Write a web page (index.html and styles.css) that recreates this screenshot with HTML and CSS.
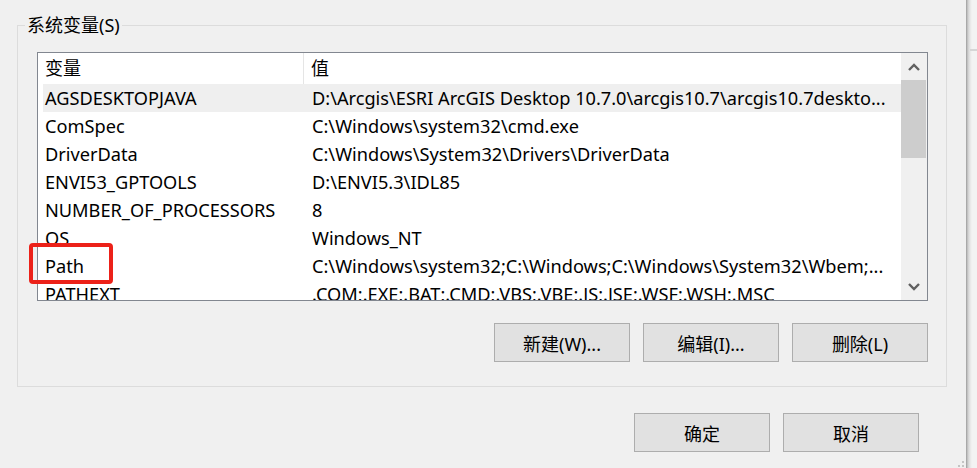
FILE: index.html
```html
<!DOCTYPE html>
<html lang="zh-CN">
<head>
<meta charset="utf-8">
<title>系统变量</title>
<link rel="stylesheet" href="styles.css">
</head>
<body>
<div class="page">
  <div class="window">
    <div class="group">
      <div class="legend">系统变量(S)</div>
      <div class="listbox">
        <div class="list">
          <div class="header">
            <div class="hcol1">变量</div>
            <div class="hcol2">值</div>
          </div>
          <div class="row sel"><span class="c1">AGSDESKTOPJAVA</span><span class="c2">D:\Arcgis\ESRI ArcGIS Desktop 10.7.0\arcgis10.7\arcgis10.7deskto...</span></div>
          <div class="row"><span class="c1">ComSpec</span><span class="c2">C:\Windows\system32\cmd.exe</span></div>
          <div class="row"><span class="c1">DriverData</span><span class="c2">C:\Windows\System32\Drivers\DriverData</span></div>
          <div class="row"><span class="c1">ENVI53_GPTOOLS</span><span class="c2">D:\ENVI5.3\IDL85</span></div>
          <div class="row"><span class="c1">NUMBER_OF_PROCESSORS</span><span class="c2">8</span></div>
          <div class="row"><span class="c1">OS</span><span class="c2">Windows_NT</span></div>
          <div class="row"><span class="c1">Path</span><span class="c2">C:\Windows\system32;C:\Windows;C:\Windows\System32\Wbem;...</span></div>
          <div class="row"><span class="c1">PATHEXT</span><span class="c2">.COM;.EXE;.BAT;.CMD;.VBS;.VBE;.JS;.JSE;.WSF;.WSH;.MSC</span></div>
        </div>
        <div class="scrollbar">
          <div class="sb-btn"><svg width="12" height="8" viewBox="0 0 12 8"><polyline points="1,7 6,2 11,7" fill="none" stroke="#606060" stroke-width="2.4"/></svg></div>
          <div class="sb-thumb"></div>
          <div class="sb-track"></div>
          <div class="sb-btn"><svg width="12" height="8" viewBox="0 0 12 8"><polyline points="1,1 6,6 11,1" fill="none" stroke="#606060" stroke-width="2.4"/></svg></div>
        </div>
      </div>
      <div class="btnrow">
        <button class="btn">新建(W)...</button>
        <button class="btn">编辑(I)...</button>
        <button class="btn">删除(L)</button>
      </div>
    </div>
    <div class="dlgrow">
      <button class="btn">确定</button>
      <button class="btn">取消</button>
    </div>
    <div class="mark"></div>
    <svg class="grip" width="10" height="8" viewBox="0 0 10 8"><rect x="6" y="1" width="2" height="2" fill="#c4c4c4"/><rect x="2" y="5" width="2" height="2" fill="#c4c4c4"/><rect x="6" y="5" width="2" height="2" fill="#c4c4c4"/></svg>
  </div>
  <div class="backdrop"><div class="backline"></div></div>
</div>
</body>
</html>
```

FILE: styles.css
```css
html, body {
  margin: 0;
  padding: 0;
  background: #f0f0f0;
}
body {
  font-family: "Noto Sans", "Noto Sans CJK SC", sans-serif;
  font-size: 18px;
  color: #000;
  overflow: hidden;
}
.page {
  display: flex;
  width: 977px;
  height: 468px;
}
.window {
  position: relative;
  width: 966px;
  height: 468px;
  flex: none;
  box-sizing: border-box;
  padding: 25px 0 0 17px;
  background: #f0f0f0;
}
.group {
  box-sizing: border-box;
  width: 930px;
  height: 362px;
  border: 1px solid #dcdcdc;
}
.legend {
  width: fit-content;
  margin: -13px 0 0 7px;
  padding: 0 2px;
  height: 24px;
  line-height: 24px;
  background: #f0f0f0;
  white-space: nowrap;
}
.listbox {
  display: flex;
  box-sizing: border-box;
  width: 891px;
  height: 249px;
  margin: 15px 0 0 19px;
  border: 1px solid #828790;
  background: #fff;
}
.list {
  flex: 1;
  min-width: 0;
  overflow: hidden;
}
.header {
  display: flex;
  height: 31px;
  background: #fff;
}
.hcol1 {
  width: 266px;
  box-sizing: border-box;
  padding-left: 7px;
  line-height: 31px;
  border-right: 1px solid #e5e5e5;
}
.hcol2 {
  padding-left: 7px;
  line-height: 31px;
}
.row {
  display: grid;
  grid-template-columns: 262px 1fr;
  height: 28px;
  line-height: 28px;
  margin-left: 5px;
  font-size: 18.2px;
  white-space: nowrap;
}
.row.sel {
  background: #efefef;
}
.c1 {
  padding-left: 2px;
  overflow: hidden;
}
.c2 {
  padding-left: 7px;
  overflow: hidden;
}
.scrollbar {
  width: 26px;
  flex: none;
  display: flex;
  flex-direction: column;
  background: #f0f0f0;
}
.sb-btn {
  height: 27px;
  display: flex;
  align-items: center;
  justify-content: center;
  flex: none;
}
.sb-thumb {
  height: 78px;
  flex: none;
  margin-right: 1px;
  background: #cdcdcd;
}
.sb-track {
  flex: 1;
}
.btnrow {
  display: flex;
  justify-content: flex-end;
  gap: 13px;
  margin-top: 22px;
  padding-right: 18px;
}
.btn {
  width: 136px;
  height: 39px;
  box-sizing: border-box;
  margin: 0;
  padding: 0;
  border: 1px solid #adadad;
  background: #e1e1e1;
  font-family: inherit;
  font-size: 18px;
  color: #000;
}
.dlgrow {
  display: flex;
  justify-content: flex-end;
  gap: 13px;
  margin-top: 26px;
  padding-right: 47px;
}
.mark {
  position: absolute;
  left: 29px;
  top: 243px;
  width: 84px;
  height: 41px;
  box-sizing: border-box;
  border: 4px solid #ec2119;
  border-radius: 4px;
}
.grip {
  position: absolute;
  right: 0;
  bottom: 0;
}
.backdrop {
  flex: 1;
  background: linear-gradient(to right, #9c9c9c 0px, #cfcfcf 2px, #e6e6e6 4px, #f3f3f3 6px);
  padding-top: 49px;
}
.backline {
  height: 2px;
  margin-left: 4px;
  background: #d6d6d6;
}
```
